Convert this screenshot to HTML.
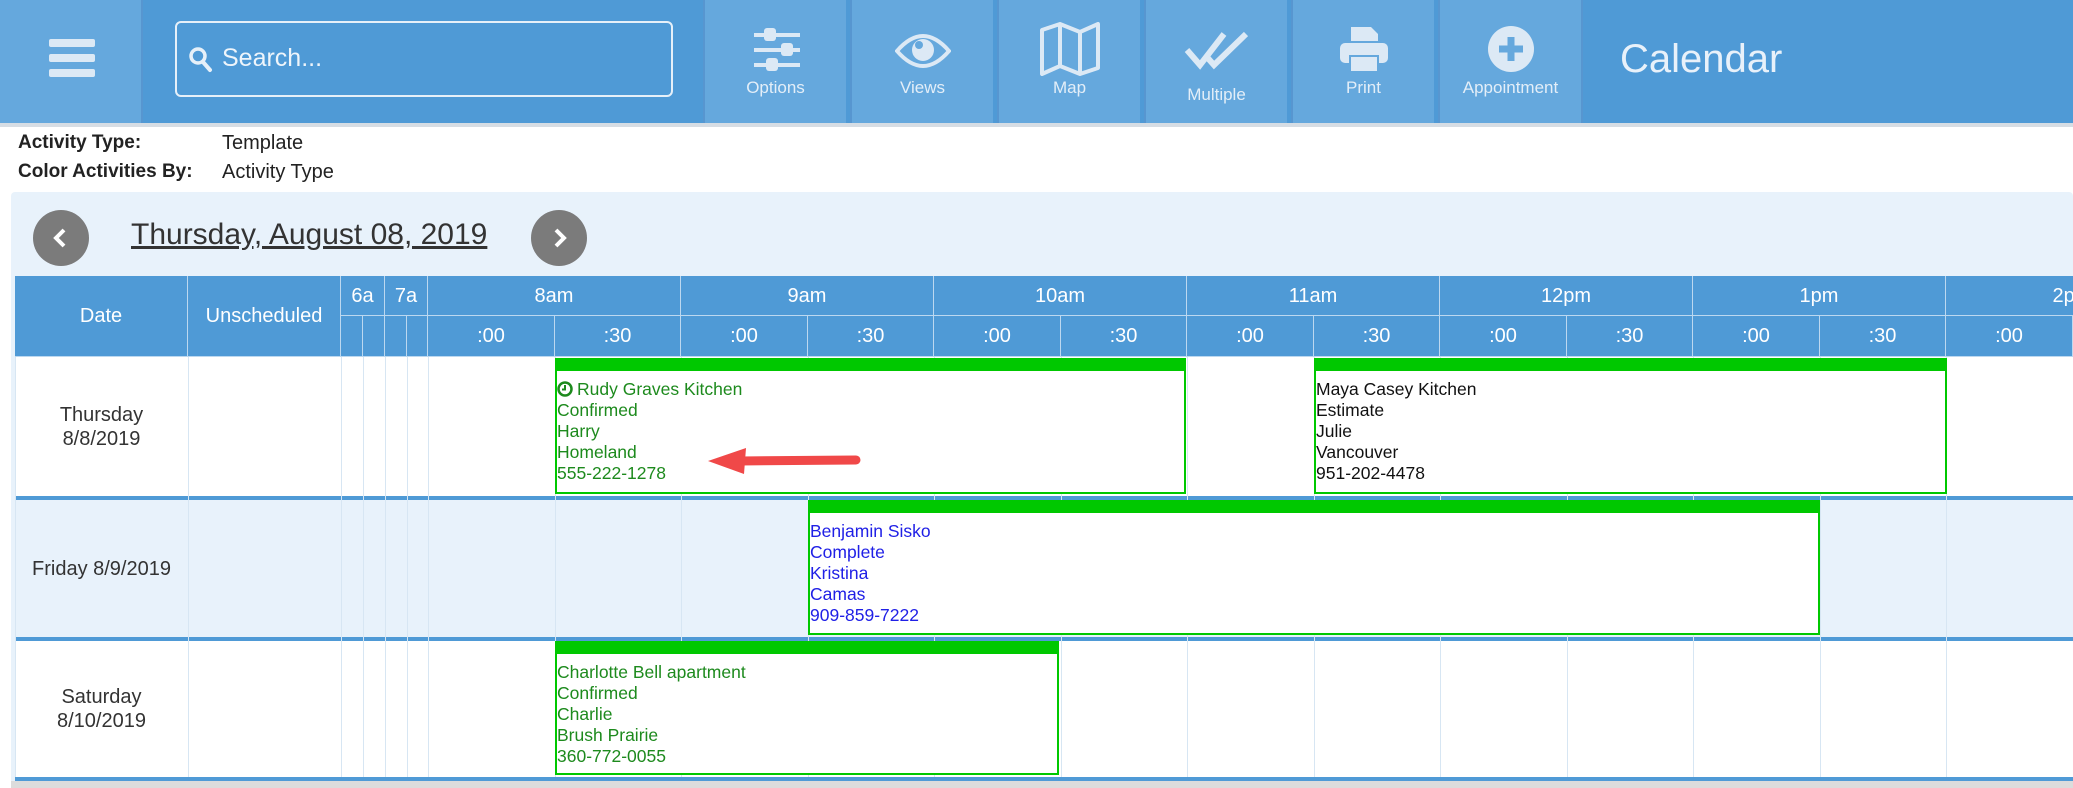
<!DOCTYPE html>
<html><head><meta charset="utf-8"><style>
*{margin:0;padding:0;box-sizing:border-box}
body{width:2073px;height:788px;overflow:hidden;background:#fff;font-family:"Liberation Sans",sans-serif;position:relative}
.a{position:absolute}
.hdr{left:0;top:0;width:2073px;height:127px;background:#4f9ad6;border-bottom:4px solid #d6dde4}
.btn{top:0;height:123px;width:143px;background:#65a8dd;border-left:2px solid #5796d0;color:#e3eef8;text-align:center;font-size:17px}
.btn svg{position:absolute;left:50%;transform:translateX(-50%)}
.btn span{position:absolute;left:0;right:0;top:78px}
.lbl{font-size:20px;color:#222}
.th{background:#4f9ad6;color:#fff;font-size:20px;text-align:center;border-right:1px solid #bcd8f0;border-bottom:1px solid #bcd8f0}
.vl{width:1px;background:#d7e6f3}
.ev{border:2px solid #00c800;border-top:13px solid #00c800;background:#fff;font-size:17.5px;line-height:21px;padding:8px 0 0 0}
.dl{font-size:20px;color:#333;text-align:center;line-height:24px}
</style></head><body>
<div class="a hdr"></div>
<div class="a" style="left:0;top:0;width:143px;height:123px;background:#65a8dd;border-right:2px solid #5796d0"></div>
<div class="a" style="left:49px;top:39px;width:46px;height:8px;background:#dce9f5;border-radius:2px"></div>
<div class="a" style="left:49px;top:54px;width:46px;height:8px;background:#dce9f5;border-radius:2px"></div>
<div class="a" style="left:49px;top:69px;width:46px;height:8px;background:#dce9f5;border-radius:2px"></div>
<div class="a" style="left:175px;top:21px;width:498px;height:76px;border:2px solid #e6f0f9;border-radius:6px"></div>
<svg class="a" style="left:188px;top:46px" width="26" height="28" viewBox="0 0 26 28"><circle cx="10" cy="10" r="7" fill="none" stroke="#e6f0f9" stroke-width="3.5"/><path d="M15 16 L22 24" stroke="#e6f0f9" stroke-width="4" stroke-linecap="round"/></svg>
<div class="a" style="left:222px;top:44px;font-size:25px;color:#eef5fb">Search...</div>

<div class="a btn" style="left:703px"><svg style="top:28px" width="48" height="44" viewBox="0 0 48 44"><g fill="#dce9f5"><rect x="2" y="5" width="46" height="4"/><rect x="12" y="0" width="12" height="13" rx="3"/><rect x="2" y="20" width="46" height="4"/><rect x="29" y="15" width="12" height="13" rx="3"/><rect x="2" y="35" width="46" height="4"/><rect x="14" y="30" width="12" height="13" rx="3"/></g></svg><span>Options</span></div>
<div class="a btn" style="left:850px"><svg style="top:33px" width="56" height="36" viewBox="0 0 56 36"><path d="M2 18 Q28 -12 54 18 Q28 48 2 18Z" fill="none" stroke="#dce9f5" stroke-width="4"/><circle cx="28" cy="17" r="11" fill="#dce9f5"/><circle cx="24" cy="12" r="4" fill="#65a8dd"/></svg><span>Views</span></div>
<div class="a btn" style="left:997px"><svg style="top:22px" width="62" height="54" viewBox="0 0 62 54"><path d="M3 8 L21 2 L41 10 L59 2 L59 46 L41 52 L21 44 L3 52Z M21 2 L21 44 M41 10 L41 52" fill="none" stroke="#dce9f5" stroke-width="4" stroke-linejoin="round"/></svg><span>Map</span></div>
<div class="a btn" style="left:1144px"><svg style="top:30px" width="66" height="40" viewBox="0 0 66 40"><path d="M3 20 L16 35 L40 4 M22 26 L30 35 L62 4" fill="none" stroke="#dce9f5" stroke-width="6"/></svg><span style="top:85px">Multiple</span></div>
<div class="a btn" style="left:1291px"><svg style="top:25px" width="52" height="48" viewBox="0 0 52 48"><path d="M13 2 L33 2 L40 9 L40 16 L13 16Z" fill="#dce9f5"/><rect x="2" y="18" width="48" height="20" rx="5" fill="#dce9f5"/><rect x="12" y="31" width="28" height="16" fill="#dce9f5" stroke="#65a8dd" stroke-width="2"/></svg><span>Print</span></div>
<div class="a btn" style="left:1438px"><svg style="top:25px" width="48" height="48" viewBox="0 0 48 48"><circle cx="24" cy="24" r="23" fill="#dce9f5"/><path d="M24 12 V36 M12 24 H36" stroke="#65a8dd" stroke-width="7"/></svg><span>Appointment</span></div>
<div class="a" style="left:1581px;top:0;width:2px;height:123px;background:#5796d0"></div>
<div class="a" style="left:1620px;top:37px;font-size:40px;color:#e8f1fa">Calendar</div>

<div class="a lbl" style="left:18px;top:132px;font-weight:bold;font-size:19px">Activity Type:</div>
<div class="a lbl" style="left:222px;top:132px">Template</div>
<div class="a lbl" style="left:18px;top:161px;font-weight:bold;font-size:19px">Color Activities By:</div>
<div class="a lbl" style="left:222px;top:161px">Activity Type</div>

<div class="a" style="left:11px;top:192px;width:2062px;height:596px;background:#e8f2fb;border-radius:4px"></div>
<div class="a" style="left:33px;top:210px;width:56px;height:56px;border-radius:50%;background:#7b7b7b"></div>
<svg class="a" style="left:49px;top:226px" width="24" height="24"><path d="M15 4 L7 12 L15 20" stroke="#fff" stroke-width="4" fill="none"/></svg>
<div class="a" style="left:131px;top:218px;font-size:30px;color:#333;text-decoration:underline">Thursday, August 08, 2019</div>
<div class="a" style="left:531px;top:210px;width:56px;height:56px;border-radius:50%;background:#7b7b7b"></div>
<svg class="a" style="left:547px;top:226px" width="24" height="24"><path d="M9 4 L17 12 L9 20" stroke="#fff" stroke-width="4" fill="none"/></svg>

<div class="a th" style="left:15px;top:276px;width:173px;height:81px;line-height:81px">Date</div>
<div class="a th" style="left:188px;top:276px;width:153px;height:81px;line-height:81px">Unscheduled</div>
<div class="a th" style="left:341px;top:276px;width:44px;height:40px;line-height:40px">6a</div>
<div class="a th" style="left:385px;top:276px;width:43px;height:40px;line-height:40px">7a</div>
<div class="a th" style="left:341px;top:316px;width:22px;height:41px"></div>
<div class="a th" style="left:363px;top:316px;width:22px;height:41px"></div>
<div class="a th" style="left:385px;top:316px;width:22px;height:41px"></div>
<div class="a th" style="left:407px;top:316px;width:21px;height:41px"></div>
<div class="a th" style="left:428px;top:276px;width:253px;height:40px;line-height:40px">8am</div>
<div class="a th" style="left:681px;top:276px;width:253px;height:40px;line-height:40px">9am</div>
<div class="a th" style="left:934px;top:276px;width:253px;height:40px;line-height:40px">10am</div>
<div class="a th" style="left:1187px;top:276px;width:253px;height:40px;line-height:40px">11am</div>
<div class="a th" style="left:1440px;top:276px;width:253px;height:40px;line-height:40px">12pm</div>
<div class="a th" style="left:1693px;top:276px;width:253px;height:40px;line-height:40px">1pm</div>
<div class="a th" style="left:1946px;top:276px;width:253px;height:40px;line-height:40px">2pm</div>
<div class="a th" style="left:428px;top:316px;width:127px;height:41px;line-height:41px">:00</div>
<div class="a th" style="left:555px;top:316px;width:126px;height:41px;line-height:41px">:30</div>
<div class="a th" style="left:681px;top:316px;width:127px;height:41px;line-height:41px">:00</div>
<div class="a th" style="left:808px;top:316px;width:126px;height:41px;line-height:41px">:30</div>
<div class="a th" style="left:934px;top:316px;width:127px;height:41px;line-height:41px">:00</div>
<div class="a th" style="left:1061px;top:316px;width:126px;height:41px;line-height:41px">:30</div>
<div class="a th" style="left:1187px;top:316px;width:127px;height:41px;line-height:41px">:00</div>
<div class="a th" style="left:1314px;top:316px;width:126px;height:41px;line-height:41px">:30</div>
<div class="a th" style="left:1440px;top:316px;width:127px;height:41px;line-height:41px">:00</div>
<div class="a th" style="left:1567px;top:316px;width:126px;height:41px;line-height:41px">:30</div>
<div class="a th" style="left:1693px;top:316px;width:127px;height:41px;line-height:41px">:00</div>
<div class="a th" style="left:1820px;top:316px;width:126px;height:41px;line-height:41px">:30</div>
<div class="a th" style="left:1946px;top:316px;width:127px;height:41px;line-height:41px">:00</div>

<div class="a" style="left:15px;top:357px;width:2058px;height:139px;background:#fff"></div>
<div class="a" style="left:15px;top:496px;width:2058px;height:4px;background:#4f9ad6"></div>
<div class="a" style="left:15px;top:500px;width:2058px;height:137px;background:#e8f2fb"></div>
<div class="a" style="left:15px;top:637px;width:2058px;height:4px;background:#4f9ad6"></div>
<div class="a" style="left:15px;top:641px;width:2058px;height:136px;background:#fff"></div>
<div class="a" style="left:15px;top:777px;width:2058px;height:4px;background:#4f9ad6"></div>
<div class="a" style="left:11px;top:781px;width:2062px;height:7px;background:#dcdcdc"></div>
<div class="a" style="left:15px;top:357px;width:1px;height:420px;background:#d7e6f3"></div>
<div class="a vl" style="left:188px;top:357px;height:420px"></div>
<div class="a vl" style="left:341px;top:357px;height:420px"></div>
<div class="a vl" style="left:363px;top:357px;height:420px"></div>
<div class="a vl" style="left:385px;top:357px;height:420px"></div>
<div class="a vl" style="left:407px;top:357px;height:420px"></div>
<div class="a vl" style="left:428px;top:357px;height:420px"></div>
<div class="a vl" style="left:555px;top:357px;height:420px"></div>
<div class="a vl" style="left:681px;top:357px;height:420px"></div>
<div class="a vl" style="left:808px;top:357px;height:420px"></div>
<div class="a vl" style="left:934px;top:357px;height:420px"></div>
<div class="a vl" style="left:1061px;top:357px;height:420px"></div>
<div class="a vl" style="left:1187px;top:357px;height:420px"></div>
<div class="a vl" style="left:1314px;top:357px;height:420px"></div>
<div class="a vl" style="left:1440px;top:357px;height:420px"></div>
<div class="a vl" style="left:1567px;top:357px;height:420px"></div>
<div class="a vl" style="left:1693px;top:357px;height:420px"></div>
<div class="a vl" style="left:1820px;top:357px;height:420px"></div>
<div class="a vl" style="left:1946px;top:357px;height:420px"></div>

<div class="a dl" style="left:15px;top:403px;width:173px">Thursday<br>8/8/2019</div>
<div class="a dl" style="left:15px;top:557px;width:173px">Friday 8/9/2019</div>
<div class="a dl" style="left:15px;top:685px;width:173px">Saturday<br>8/10/2019</div>

<div class="a ev" style="left:555px;top:358px;width:631px;height:136px;color:#1d8a1d"><svg width="16" height="16" viewBox="0 0 16 16" style="vertical-align:-2px;margin-right:4px"><circle cx="8" cy="8" r="6.5" fill="none" stroke="#1d8a1d" stroke-width="2.5"/><path d="M8 4 V8.5 H5" stroke="#1d8a1d" stroke-width="2" fill="none"/></svg>Rudy Graves Kitchen<br>Confirmed<br>Harry<br>Homeland<br>555-222-1278</div>
<div class="a ev" style="left:1314px;top:358px;width:633px;height:136px;color:#111">Maya Casey Kitchen<br>Estimate<br>Julie<br>Vancouver<br>951-202-4478</div>
<div class="a ev" style="left:808px;top:500px;width:1012px;height:135px;color:#2020e6">Benjamin Sisko<br>Complete<br>Kristina<br>Camas<br>909-859-7222</div>
<div class="a ev" style="left:555px;top:641px;width:504px;height:134px;color:#1d8a1d">Charlotte Bell apartment<br>Confirmed<br>Charlie<br>Brush Prairie<br>360-772-0055</div>

<svg class="a" style="left:700px;top:440px" width="165" height="40"><path d="M156 20 L40 21" stroke="#f04848" stroke-width="9" stroke-linecap="round"/><path d="M8 21 L46 8 L44 34Z" fill="#f04848"/></svg>
</body></html>
